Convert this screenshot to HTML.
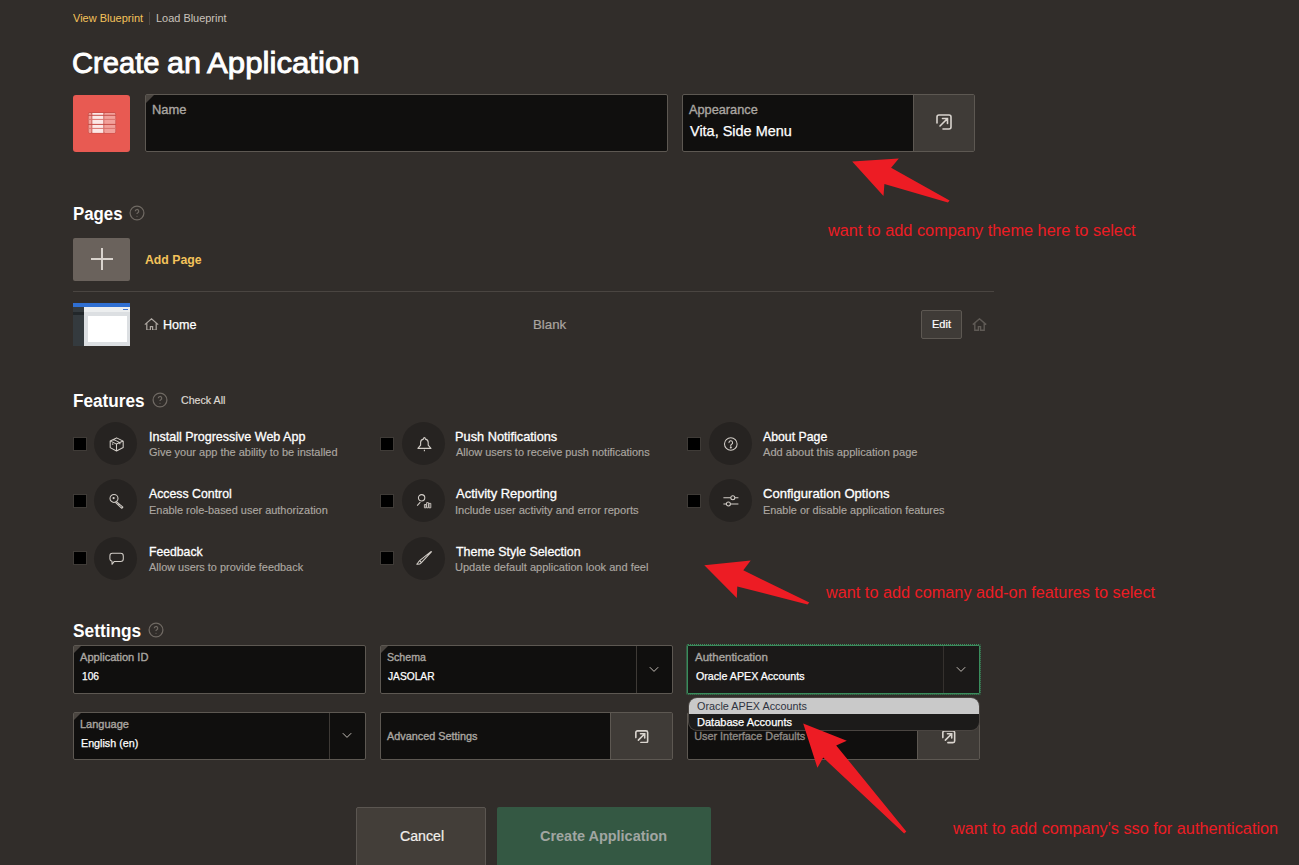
<!DOCTYPE html>
<html><head><meta charset="utf-8">
<style>
*{box-sizing:border-box;margin:0;padding:0}
html,body{width:1299px;height:865px;overflow:hidden;background:#312d2a;font-family:"Liberation Sans",sans-serif;color:#fff}
.a{position:absolute}
.t{position:absolute;white-space:nowrap;line-height:1}
</style></head><body>
<div class="t" style="left:73.16px;top:13.23px;font-size:11.3px;color:#f4c35a;font-weight:normal;transform:scaleX(0.9731);transform-origin:0 0;">View Blueprint</div>
<div class="a" style="left:149px;top:12px;width:1px;height:13px;background:#4d4843"></div>
<div class="t" style="left:155.50px;top:13.20px;font-size:11.1px;color:#c9c3bc;font-weight:normal;transform:scaleX(0.9863);transform-origin:0 0;">Load Blueprint</div>
<div class="t" style="left:72.30px;top:48.40px;font-size:30px;color:#fff;font-weight:normal;-webkit-text-stroke:0.9px #fff;transform:scaleX(0.9720);transform-origin:0 0;">Create</div>
<div class="t" style="left:166.50px;top:48.40px;font-size:30px;color:#fff;font-weight:normal;-webkit-text-stroke:0.9px #fff;transform:scaleX(1.0200);transform-origin:0 0;">an</div>
<div class="t" style="left:207.20px;top:48.40px;font-size:30px;color:#fff;font-weight:normal;-webkit-text-stroke:0.9px #fff;transform:scaleX(1.0400);transform-origin:0 0;">Application</div>
<div class="a" style="left:73px;top:95px;width:57px;height:57px;background:#e85a52;border-radius:3px"></div>
<svg class="a" style="left:87px;top:111px" width="30" height="24" viewBox="0 0 30 24">
<rect x="0.9" y="1.3" width="28.2" height="21.3" rx="2" fill="#c54c46"/>
<rect x="1.6" y="2" width="2.9" height="19.9" rx="1" fill="#f2a09a"/>
<rect x="5.3" y="2" width="11.1" height="19.9" fill="#fce8e6"/>
<rect x="17.2" y="2" width="11.2" height="19.9" rx="1" fill="#f2a09a"/>
<g stroke="#c54c46" stroke-width="1"><line x1="1" y1="4.3" x2="29" y2="4.3"/><line x1="1" y1="13.4" x2="29" y2="13.4"/></g>
<g stroke="#d9736d" stroke-width="1"><line x1="1" y1="8.4" x2="29" y2="8.4"/><line x1="1" y1="17.4" x2="29" y2="17.4"/></g>
</svg>
<div class="a" style="left:145px;top:94px;width:523px;height:58px;background:#100f0e;border:1px solid #5d5852;border-radius:2px"></div>
<svg class="a" style="left:146px;top:95px" width="8" height="8"><polygon points="0,0 8,0 0,8" fill="#4a4540"/></svg>
<div class="t" style="left:151.84px;top:104.05px;font-size:12.7px;color:#aaa6a1;font-weight:normal;-webkit-text-stroke:0.35px #aaa6a1;transform:scaleX(1.0177);transform-origin:0 0;">Name</div>
<div class="a" style="left:682px;top:94px;width:293px;height:58px;background:#100f0e;border:1px solid #5d5852;border-radius:2px"></div>
<div class="a" style="left:913px;top:95px;width:61px;height:56px;background:#3f3b37;border-left:1px solid #5d5852"></div>
<div class="t" style="left:688.98px;top:104.13px;font-size:12.6px;color:#aaa6a1;font-weight:normal;-webkit-text-stroke:0.35px #aaa6a1;transform:scaleX(1.0118);transform-origin:0 0;">Appearance</div>
<div class="t" style="left:690.34px;top:124.39px;font-size:14.3px;color:#fff;font-weight:normal;-webkit-text-stroke:0.25px #fff;transform:scaleX(1.0120);transform-origin:0 0;">Vita, Side Menu</div>
<svg class="a" style="left:936px;top:114px" width="16" height="16" viewBox="0 0 16 16" fill="none" stroke="#d9d4ce" stroke-width="1.60" stroke-linecap="round">
<path d="M1 9V3a2 2 0 0 1 2-2h10a2 2 0 0 1 2 2v10a2 2 0 0 1-2 2H7"/><path d="M4 12L11.5 4.5M6.5 4.5h5v5"/></svg>
<div class="t" style="left:73.48px;top:205.36px;font-size:18px;color:#fff;font-weight:bold;transform:scaleX(0.9341);transform-origin:0 0;">Pages</div>
<svg class="a" style="left:128.2px;top:204.1px" width="18" height="18" viewBox="0 0 18 18" fill="none" stroke="#6f6963" stroke-width="1.25">
<circle cx="9" cy="9" r="6.9"/><path d="M7.3 7.2a1.7 1.7 0 1 1 2.5 1.5c-.5.25-.8.55-.8 1v.2" stroke-linecap="butt"/><circle cx="9" cy="12.3" r="0.55" fill="#6f6963" stroke="none"/></svg>
<div class="a" style="left:73px;top:238px;width:57px;height:43px;background:#6a625c;border-radius:2px"></div>
<div class="a" style="left:91px;top:258px;width:22px;height:2px;background:#d9d3cd"></div>
<div class="a" style="left:101px;top:248px;width:2px;height:22px;background:#d9d3cd"></div>
<div class="t" style="left:145.00px;top:253.90px;font-size:12.4px;color:#f4c35a;font-weight:bold;transform:scaleX(0.9897);transform-origin:0 0;">Add Page</div>
<div class="a" style="left:73px;top:291px;width:921px;height:1px;background:#4a4541"></div>
<div class="a" style="left:73px;top:303px;width:57px;height:43px;background:#dcdfe2"></div>
<div class="a" style="left:73px;top:303px;width:57px;height:4px;background:#2f6fd2"></div>
<div class="a" style="left:73px;top:307px;width:11px;height:39px;background:#343a3e"></div>
<div class="a" style="left:73px;top:312px;width:11px;height:2.5px;background:#22272a"></div>
<div class="a" style="left:84px;top:307px;width:46px;height:5px;background:#eceeef"></div>
<div class="a" style="left:122.8px;top:308.5px;width:5.5px;height:1.5px;background:#3d74d0"></div>
<div class="a" style="left:87.7px;top:315.6px;width:39.4px;height:26.7px;background:#ffffff"></div>
<svg class="a" style="left:144.4px;top:317.5px" width="15" height="12.8" viewBox="0 0 15 12.75" fill="none" stroke="#aea8a2" stroke-width="1.2" stroke-linejoin="miter">
<path d="M0.8 6.6L7.5 0.8L14.2 6.6M2.8 5v7.2h3.6V8.6h2.2v3.6h3.6V5"/></svg>
<div class="t" style="left:162.68px;top:319.16px;font-size:12.8px;color:#fff;font-weight:normal;-webkit-text-stroke:0.25px #fff;transform:scaleX(0.9829);transform-origin:0 0;">Home</div>
<div class="t" style="left:532.50px;top:319.16px;font-size:12.8px;color:#aaa5a0;font-weight:normal;-webkit-text-stroke:0.2px #aaa5a0;transform:scaleX(1.0389);transform-origin:0 0;">Blank</div>
<div class="a" style="left:921px;top:310px;width:41px;height:29px;background:#3f3b37;border:1px solid #5d5852;border-radius:2px"></div>
<div class="t" style="left:931.98px;top:319.49px;font-size:11px;color:#fff;font-weight:normal;-webkit-text-stroke:0.2px #fff;transform:scaleX(1.0028);transform-origin:0 0;">Edit</div>
<svg class="a" style="left:972.3px;top:317.8px" width="15" height="12.8" viewBox="0 0 15 12.75" fill="none" stroke="#5f5a55" stroke-width="1.4" stroke-linejoin="miter">
<path d="M0.8 6.6L7.5 0.8L14.2 6.6M2.8 5v7.2h3.6V8.6h2.2v3.6h3.6V5"/></svg>
<div class="t" style="left:73.48px;top:391.96px;font-size:18px;color:#fff;font-weight:bold;transform:scaleX(0.9546);transform-origin:0 0;">Features</div>
<svg class="a" style="left:150.5px;top:391px" width="18" height="18" viewBox="0 0 18 18" fill="none" stroke="#6f6963" stroke-width="1.25">
<circle cx="9" cy="9" r="6.9"/><path d="M7.3 7.2a1.7 1.7 0 1 1 2.5 1.5c-.5.25-.8.55-.8 1v.2" stroke-linecap="butt"/><circle cx="9" cy="12.3" r="0.55" fill="#6f6963" stroke="none"/></svg>
<div class="t" style="left:181.24px;top:395.16px;font-size:10.8px;color:#ddd8d2;font-weight:normal;-webkit-text-stroke:0.2px #ddd8d2;transform:scaleX(0.9867);transform-origin:0 0;">Check All</div>
<div class="a" style="left:73px;top:436.5px;width:14px;height:14px;background:#000;border:1px solid #3f3b37"></div>
<div class="a" style="left:94.0px;top:422.0px;width:43px;height:43px;background:#262321;border-radius:50%"></div>
<svg class="a" style="left:107.5px;top:435.5px;color:#d9d4ce" width="17" height="17" viewBox="-1 -1 17 17" fill="none" stroke="#d2cdc7" stroke-width="1.05" stroke-linejoin="round"><path d="M7.6 0.9L14.2 4.1V10.5L7.5 14L1.2 10.6V3.9Z M1.2 3.9L7.5 7.1L14.2 4.1 M7.5 7.1V14 M4.2 2.4L10.9 5.6V7.2 M3 6.8L4.3 7.5"/></svg>
<div class="t" style="left:148.50px;top:431.06px;font-size:12.8px;color:#fff;font-weight:normal;-webkit-text-stroke:0.3px #fff;transform:scaleX(0.9787);transform-origin:0 0;">Install Progressive Web App</div>
<div class="t" style="left:148.50px;top:447.19px;font-size:11px;color:#aca7a1;font-weight:normal;-webkit-text-stroke:0.15px #aca7a1;transform:scaleX(0.9979);transform-origin:0 0;">Give your app the ability to be installed</div>
<div class="a" style="left:380px;top:436.5px;width:14px;height:14px;background:#000;border:1px solid #3f3b37"></div>
<div class="a" style="left:402.0px;top:422.0px;width:43px;height:43px;background:#262321;border-radius:50%"></div>
<svg class="a" style="left:415.5px;top:435.5px;color:#d9d4ce" width="17" height="17" viewBox="-1 -1 17 17" fill="none" stroke="#d2cdc7" stroke-width="1.05" stroke-linejoin="round"><path d="M0.9 11.4H13.9L11.2 8.2V5.4C11.2 3.6 10 2.4 8.4 2.1C8.3 1.2 7.9 0.6 7.4 0.6C6.9 0.6 6.5 1.2 6.4 2.1C4.8 2.4 3.6 3.6 3.6 5.4V8.2Z M7.4 12.8V14.2" stroke-width="1.1"/></svg>
<div class="t" style="left:455.48px;top:431.06px;font-size:12.8px;color:#fff;font-weight:normal;-webkit-text-stroke:0.3px #fff;transform:scaleX(0.9984);transform-origin:0 0;">Push Notifications</div>
<div class="t" style="left:456.28px;top:447.19px;font-size:11px;color:#aca7a1;font-weight:normal;-webkit-text-stroke:0.15px #aca7a1;transform:scaleX(0.9928);transform-origin:0 0;">Allow users to receive push notifications</div>
<div class="a" style="left:687px;top:436.5px;width:14px;height:14px;background:#000;border:1px solid #3f3b37"></div>
<div class="a" style="left:709.0px;top:422.0px;width:43px;height:43px;background:#262321;border-radius:50%"></div>
<svg class="a" style="left:722.5px;top:435.5px;color:#d9d4ce" width="17" height="17" viewBox="-1 -1 17 17" fill="none" stroke="#d2cdc7" stroke-width="1.05" stroke-linejoin="round"><circle cx="6.8" cy="7" r="6.3"/><path d="M5 5.6a1.8 1.8 0 1 1 2.6 1.6c-.5.25-.8.6-.8 1.1v.7" stroke-linecap="round"/><circle cx="6.8" cy="10.4" r=".5" fill="currentColor"/></svg>
<div class="t" style="left:763.00px;top:431.06px;font-size:12.8px;color:#fff;font-weight:normal;-webkit-text-stroke:0.3px #fff;transform:scaleX(0.9605);transform-origin:0 0;">About Page</div>
<div class="t" style="left:762.50px;top:447.19px;font-size:11px;color:#aca7a1;font-weight:normal;-webkit-text-stroke:0.15px #aca7a1;transform:scaleX(1.0065);transform-origin:0 0;">Add about this application page</div>
<div class="a" style="left:73px;top:493.9px;width:14px;height:14px;background:#000;border:1px solid #3f3b37"></div>
<div class="a" style="left:94.0px;top:479.4px;width:43px;height:43px;background:#262321;border-radius:50%"></div>
<svg class="a" style="left:107.5px;top:492.9px;color:#d9d4ce" width="17" height="17" viewBox="-1 -1 17 17" fill="none" stroke="#d2cdc7" stroke-width="1.05" stroke-linejoin="round"><circle cx="5" cy="4.4" r="4"/><circle cx="4.6" cy="4" r=".6" fill="currentColor"/><path d="M7.4 7.6L13.9 13.2L12.8 14.3L6.4 8.4 M9.6 11.4L11 10"/></svg>
<div class="t" style="left:149.00px;top:488.46px;font-size:12.8px;color:#fff;font-weight:normal;-webkit-text-stroke:0.3px #fff;transform:scaleX(0.9613);transform-origin:0 0;">Access Control</div>
<div class="t" style="left:148.50px;top:504.59px;font-size:11px;color:#aca7a1;font-weight:normal;-webkit-text-stroke:0.15px #aca7a1;transform:scaleX(0.9944);transform-origin:0 0;">Enable role-based user authorization</div>
<div class="a" style="left:380px;top:493.9px;width:14px;height:14px;background:#000;border:1px solid #3f3b37"></div>
<div class="a" style="left:402.0px;top:479.4px;width:43px;height:43px;background:#262321;border-radius:50%"></div>
<svg class="a" style="left:415.5px;top:492.9px;color:#d9d4ce" width="17" height="17" viewBox="-1 -1 17 17" fill="none" stroke="#d2cdc7" stroke-width="1.05" stroke-linejoin="round"><circle cx="4.6" cy="3.8" r="3.2"/><path d="M0.2 11.6L3.3 8.2"/><g stroke-width="0.9"><rect x="7.4" y="10.5" width="1.6" height="3.3"/><rect x="9.6" y="8.6" width="1.8" height="5.2"/><rect x="12" y="9.4" width="1.8" height="4.4"/></g></svg>
<div class="t" style="left:456.30px;top:488.46px;font-size:12.8px;color:#fff;font-weight:normal;-webkit-text-stroke:0.3px #fff;transform:scaleX(1.0148);transform-origin:0 0;">Activity Reporting</div>
<div class="t" style="left:455.30px;top:504.59px;font-size:11px;color:#aca7a1;font-weight:normal;-webkit-text-stroke:0.15px #aca7a1;transform:scaleX(1.0110);transform-origin:0 0;">Include user activity and error reports</div>
<div class="a" style="left:687px;top:493.9px;width:14px;height:14px;background:#000;border:1px solid #3f3b37"></div>
<div class="a" style="left:709.0px;top:479.4px;width:43px;height:43px;background:#262321;border-radius:50%"></div>
<svg class="a" style="left:722.5px;top:492.9px;color:#d9d4ce" width="17" height="17" viewBox="-1 -1 17 17" fill="none" stroke="#d2cdc7" stroke-width="1.05" stroke-linejoin="round"><path d="M-0.6 3.7H6.8M10.8 3.7H14.4 M-0.6 10H2.4M6.4 10H14.4"/><circle cx="8.8" cy="3.7" r="2"/><circle cx="4.4" cy="10" r="2"/></svg>
<div class="t" style="left:762.50px;top:488.46px;font-size:12.8px;color:#fff;font-weight:normal;-webkit-text-stroke:0.3px #fff;transform:scaleX(1.0217);transform-origin:0 0;">Configuration Options</div>
<div class="t" style="left:762.50px;top:504.59px;font-size:11px;color:#aca7a1;font-weight:normal;-webkit-text-stroke:0.15px #aca7a1;transform:scaleX(0.9891);transform-origin:0 0;">Enable or disable application features</div>
<div class="a" style="left:73px;top:551.3px;width:14px;height:14px;background:#000;border:1px solid #3f3b37"></div>
<div class="a" style="left:94.0px;top:536.8px;width:43px;height:43px;background:#262321;border-radius:50%"></div>
<svg class="a" style="left:107.5px;top:550.3px;color:#d9d4ce" width="17" height="17" viewBox="-1 -1 17 17" fill="none" stroke="#d2cdc7" stroke-width="1.05" stroke-linejoin="round"><path d="M3.3 2.3H11.6C13.3 2.3 14.3 3.3 14.3 4.9V7.9C14.3 9.4 13.3 10.4 11.6 10.4H5.3L3 13.3V10.2C1.7 9.8 0.9 9 0.9 7.9V4.9C0.9 3.3 1.9 2.3 3.3 2.3Z"/></svg>
<div class="t" style="left:148.50px;top:545.86px;font-size:12.8px;color:#fff;font-weight:normal;-webkit-text-stroke:0.3px #fff;transform:scaleX(0.9538);transform-origin:0 0;">Feedback</div>
<div class="t" style="left:148.50px;top:561.99px;font-size:11px;color:#aca7a1;font-weight:normal;-webkit-text-stroke:0.15px #aca7a1;transform:scaleX(0.9923);transform-origin:0 0;">Allow users to provide feedback</div>
<div class="a" style="left:380px;top:551.3px;width:14px;height:14px;background:#000;border:1px solid #3f3b37"></div>
<div class="a" style="left:402.0px;top:536.8px;width:43px;height:43px;background:#262321;border-radius:50%"></div>
<svg class="a" style="left:415.5px;top:550.3px;color:#d9d4ce" width="17" height="17" viewBox="-1 -1 17 17" fill="none" stroke="#d2cdc7" stroke-width="1.05" stroke-linejoin="round"><path d="M-0.2 13.2C1.6 13.4 3.2 13 4.2 11.8L14.6 0.7L13.6 0.8L2.6 9.6C1.4 10.6 1.5 11.9 -0.2 13.2Z M2.8 9.9L4.2 11.4"/></svg>
<div class="t" style="left:456.30px;top:545.86px;font-size:12.8px;color:#fff;font-weight:normal;-webkit-text-stroke:0.3px #fff;transform:scaleX(0.9734);transform-origin:0 0;">Theme Style Selection</div>
<div class="t" style="left:455.48px;top:561.99px;font-size:11px;color:#aca7a1;font-weight:normal;-webkit-text-stroke:0.15px #aca7a1;transform:scaleX(1.0042);transform-origin:0 0;">Update default application look and feel</div>
<div class="t" style="left:73.16px;top:622.06px;font-size:18px;color:#fff;font-weight:bold;transform:scaleX(0.9609);transform-origin:0 0;">Settings</div>
<svg class="a" style="left:146.5px;top:621px" width="18" height="18" viewBox="0 0 18 18" fill="none" stroke="#6f6963" stroke-width="1.25">
<circle cx="9" cy="9" r="6.9"/><path d="M7.3 7.2a1.7 1.7 0 1 1 2.5 1.5c-.5.25-.8.55-.8 1v.2" stroke-linecap="butt"/><circle cx="9" cy="12.3" r="0.55" fill="#6f6963" stroke="none"/></svg>
<div class="a" style="left:73px;top:645px;width:293px;height:49px;background:#100f0e;border:1px solid #5d5852;border-radius:2px"></div>
<svg class="a" style="left:74px;top:646px" width="7" height="7"><polygon points="0,0 7,0 0,7" fill="#4a4540"/></svg>
<div class="t" style="left:80.00px;top:651.96px;font-size:10.8px;color:#aaa6a1;font-weight:normal;-webkit-text-stroke:0.35px #aaa6a1;transform:scaleX(1.0270);transform-origin:0 0;">Application ID</div>
<div class="t" style="left:81.52px;top:670.96px;font-size:10.8px;color:#fff;font-weight:normal;-webkit-text-stroke:0.25px #fff;transform:scaleX(0.9444);transform-origin:0 0;">106</div>
<div class="a" style="left:380px;top:645px;width:293px;height:49px;background:#100f0e;border:1px solid #5d5852;border-radius:2px"></div>
<svg class="a" style="left:381px;top:646px" width="7" height="7"><polygon points="0,0 7,0 0,7" fill="#4a4540"/></svg>
<div class="a" style="left:636px;top:646px;width:1px;height:47px;background:#3e3a36"></div>
<div class="t" style="left:387.00px;top:652.04px;font-size:10.7px;color:#aaa6a1;font-weight:normal;-webkit-text-stroke:0.35px #aaa6a1;transform:scaleX(0.9904);transform-origin:0 0;">Schema</div>
<div class="t" style="left:388.24px;top:671.89px;font-size:10.4px;color:#fff;font-weight:normal;-webkit-text-stroke:0.25px #fff;transform:scaleX(0.9835);transform-origin:0 0;">JASOLAR</div>
<svg class="a" style="left:649px;top:665.9px" width="10" height="7" viewBox="0 0 10 7" fill="none" stroke="#c4beb8" stroke-width="1"><path d="M0.8 1.2L5 5.4L9.2 1.2"/></svg>
<div class="a" style="left:687px;top:645px;width:293px;height:49px;background:#1b1918;border:1px solid #3a8c5c;outline:1px dotted #3a8c5c;border-radius:1px"></div>
<div class="a" style="left:943px;top:646px;width:1px;height:47px;background:#35312e"></div>
<div class="t" style="left:694.52px;top:652.35px;font-size:11.4px;color:#aaa6a1;font-weight:normal;-webkit-text-stroke:0.35px #aaa6a1;transform:scaleX(1.0084);transform-origin:0 0;">Authentication</div>
<div class="t" style="left:695.76px;top:671.04px;font-size:10.7px;color:#fff;font-weight:normal;-webkit-text-stroke:0.25px #fff;transform:scaleX(0.9984);transform-origin:0 0;">Oracle APEX Accounts</div>
<svg class="a" style="left:956px;top:665.9px" width="10" height="7" viewBox="0 0 10 7" fill="none" stroke="#c4beb8" stroke-width="1"><path d="M0.8 1.2L5 5.4L9.2 1.2"/></svg>
<div class="a" style="left:73px;top:712px;width:293px;height:48px;background:#100f0e;border:1px solid #5d5852;border-radius:2px"></div>
<svg class="a" style="left:74px;top:713px" width="7" height="7"><polygon points="0,0 7,0 0,7" fill="#4a4540"/></svg>
<div class="a" style="left:329px;top:713px;width:1px;height:46px;background:#3e3a36"></div>
<div class="t" style="left:80.00px;top:719.17px;font-size:10.9px;color:#aaa6a1;font-weight:normal;-webkit-text-stroke:0.35px #aaa6a1;transform:scaleX(1.0084);transform-origin:0 0;">Language</div>
<div class="t" style="left:81.26px;top:738.14px;font-size:10.7px;color:#fff;font-weight:normal;-webkit-text-stroke:0.25px #fff;transform:scaleX(1.0036);transform-origin:0 0;">English (en)</div>
<svg class="a" style="left:342px;top:731.6px" width="10" height="7" viewBox="0 0 10 7" fill="none" stroke="#c4beb8" stroke-width="1"><path d="M0.8 1.2L5 5.4L9.2 1.2"/></svg>
<div class="a" style="left:380px;top:712px;width:293px;height:48px;background:#100f0e;border:1px solid #5d5852;border-radius:2px"></div>
<div class="a" style="left:610px;top:713px;width:62px;height:46px;background:#3f3b37;border-left:1px solid #5d5852"></div>
<div class="t" style="left:386.84px;top:730.77px;font-size:10.9px;color:#aaa6a1;font-weight:normal;-webkit-text-stroke:0.35px #aaa6a1;transform:scaleX(0.9956);transform-origin:0 0;">Advanced Settings</div>
<svg class="a" style="left:635px;top:729.5px" width="13.5" height="13.5" viewBox="0 0 16 16" fill="none" stroke="#d9d4ce" stroke-width="1.90" stroke-linecap="round">
<path d="M1 9V3a2 2 0 0 1 2-2h10a2 2 0 0 1 2 2v10a2 2 0 0 1-2 2H7"/><path d="M4 12L11.5 4.5M6.5 4.5h5v5"/></svg>
<div class="a" style="left:687px;top:712px;width:293px;height:48px;background:#100f0e;border:1px solid #5d5852;border-radius:2px"></div>
<div class="a" style="left:917px;top:713px;width:62px;height:46px;background:#3f3b37;border-left:1px solid #5d5852"></div>
<div class="t" style="left:694.20px;top:731.11px;font-size:10.85px;color:#8e8984;font-weight:normal;-webkit-text-stroke:0.35px #8e8984;">User Interface Defaults</div>
<svg class="a" style="left:942px;top:730px" width="13.5" height="13.5" viewBox="0 0 16 16" fill="none" stroke="#d9d4ce" stroke-width="1.90" stroke-linecap="round">
<path d="M1 9V3a2 2 0 0 1 2-2h10a2 2 0 0 1 2 2v10a2 2 0 0 1-2 2H7"/><path d="M4 12L11.5 4.5M6.5 4.5h5v5"/></svg>
<div class="a" style="left:689px;top:698px;width:290px;height:32px;border-radius:8px 8px 8px 8px;overflow:hidden;background:#1c1b1a;box-shadow:0 0 0 1px #4a4541"><div style="height:16px;background:#c9c9c9"></div></div>
<div class="t" style="left:696.76px;top:701.31px;font-size:10.85px;color:#2f3340;font-weight:normal;transform:scaleX(0.9964);transform-origin:0 0;">Oracle APEX Accounts</div>
<div class="t" style="left:696.52px;top:716.90px;font-size:11.1px;color:#fff;font-weight:normal;-webkit-text-stroke:0.25px #fff;transform:scaleX(0.9938);transform-origin:0 0;">Database Accounts</div>
<div class="a" style="left:356px;top:807px;width:130px;height:70px;background:#433e39;border:1px solid #5b5651;border-radius:2px"></div>
<div class="t" style="left:399.50px;top:828.86px;font-size:14.1px;color:#f2efec;font-weight:normal;-webkit-text-stroke:0.2px #f2efec;transform:scaleX(1.0048);transform-origin:0 0;">Cancel</div>
<div class="a" style="left:497px;top:807px;width:214px;height:70px;background:#345843;border-radius:2px"></div>
<div class="t" style="left:540.32px;top:828.61px;font-size:14.4px;color:#a1a6a2;font-weight:bold;transform:scaleX(1.0047);transform-origin:0 0;">Create Application</div>
<div class="t" style="left:828.24px;top:222.00px;font-size:16.3px;color:#ed1c24;font-weight:normal;transform:scaleX(1.0026);transform-origin:0 0;">want to add company theme here to select</div>
<div class="t" style="left:826.48px;top:583.60px;font-size:16.3px;color:#ed1c24;font-weight:normal;transform:scaleX(0.9988);transform-origin:0 0;">want to add comany add-on features to select</div>
<div class="t" style="left:952.50px;top:819.60px;font-size:16.3px;color:#ed1c24;font-weight:normal;transform:scaleX(0.9994);transform-origin:0 0;">want to add company&#39;s sso for authentication</div>
<svg class="a" style="left:0;top:0" width="1299" height="865"><polygon points="852.2,161.4 898.8,158.5 891.1,167.8 949.6,200.4 947.9,202.5 884.4,183.9 883.5,196.1" fill="#ed1c24"/></svg>
<svg class="a" style="left:0;top:0" width="1299" height="865"><polygon points="704.3,565.2 750.7,560.6 743.3,570.3 809.3,602.5 807.5,604.5 737.3,586.5 736.8,598" fill="#ed1c24"/></svg>
<svg class="a" style="left:0;top:0" width="1299" height="865"><polygon points="803.2,723.4 846.8,740.7 836.2,745.4 906.3,831.4 904.2,833.5 823.2,757.6 817.4,767.8" fill="#ed1c24"/></svg>
</body></html>
